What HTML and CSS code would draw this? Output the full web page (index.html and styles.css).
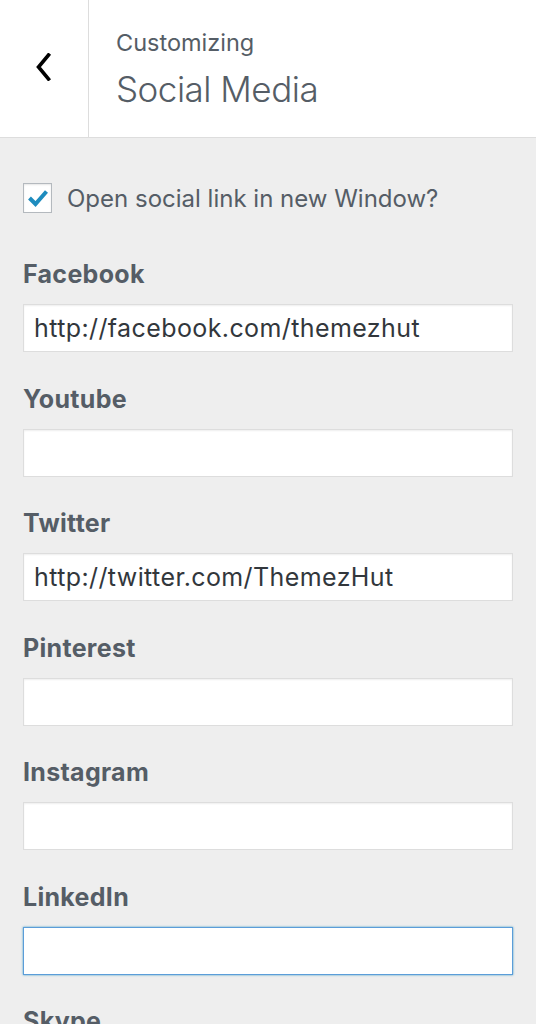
FILE: index.html
```html
<!DOCTYPE html>
<html>
<head>
<meta charset="utf-8">
<link rel="stylesheet" href="styles.css">
</head>
<body>
<div class="header">
  <div class="back">
    <svg width="18" height="28" viewBox="0 0 18 28"><path d="M14.5 2 L4.5 14 L14.5 26" fill="none" stroke="#000" stroke-width="3.6" stroke-linecap="square"/></svg>
  </div>
  <div class="titles">
    <div class="sub">Customizing</div>
    <div class="title">Social Media</div>
  </div>
</div>
<div class="content">
  <label class="check">
    <span class="box"><svg width="22" height="18" viewBox="0 0 22 18"><path d="M2.5 9 L8.5 15 L19.5 2.5" fill="none" stroke="#1e8cbe" stroke-width="4"/></svg></span>
    <span class="check-text">Open social link in new Window?</span>
  </label>
  <div class="field"><div class="label">Facebook</div><div class="input">http://facebook.com/themezhut</div></div>
  <div class="field"><div class="label">Youtube</div><div class="input"></div></div>
  <div class="field"><div class="label">Twitter</div><div class="input">http://twitter.com/ThemezHut</div></div>
  <div class="field"><div class="label">Pinterest</div><div class="input"></div></div>
  <div class="field"><div class="label">Instagram</div><div class="input"></div></div>
  <div class="field"><div class="label">LinkedIn</div><div class="input focus"></div></div>
  <div class="field"><div class="label">Skype</div><div class="input"></div></div>
</div>
</body>
</html>
```
FILE: styles.css
```css
html, body { margin: 0; padding: 0; }
body { background: #eeeeee; font-family: Inter, "Noto Sans", sans-serif; color: #555d66; width: 536px; height: 1024px; overflow: hidden; }
.header { display: flex; height: 137px; background: #fff; border-bottom: 1px solid #dddddd; }
.back { width: 89px; flex: none; border-right: 1px solid #dddddd; display: flex; align-items: center; justify-content: center; padding-bottom: 3px; box-sizing: border-box; }
.back svg { margin-left: -2px; }
.titles { padding-left: 27px; padding-top: 29px; }
.sub { font-size: 23.5px; line-height: 28px; color: #555d66; }
.title { font-size: 35px; font-weight: 300; line-height: 40px; letter-spacing: -0.5px; color: #555d66; margin-top: 12px; }
.content { padding: 45px 23px 0 23px; }
.check { display: flex; align-items: center; gap: 15px; height: 30px; }
.box { width: 29px; height: 30px; border: 1px solid #b4b9be; background: #fff; display: flex; align-items: center; justify-content: center; box-sizing: border-box; box-shadow: inset 0 1px 2px rgba(0,0,0,0.1); }
.check-text { font-size: 24px; color: #555d66; }
.field { margin-top: 31.5px; }
.check + .field { margin-top: 46px; }
.label { font-size: 25px; font-weight: 700; letter-spacing: 0.3px; line-height: 30px; margin-bottom: 15px; color: #555d66; }
.input { height: 48px; box-sizing: border-box; background: #fff; border: 1px solid #dddddd; box-shadow: inset 0 1px 2px rgba(0,0,0,0.07); font-size: 25px; letter-spacing: 0.4px; color: #32373c; padding: 0 10px; line-height: 46px; }
.input.focus { border-color: #5b9dd9; box-shadow: 0 0 2px rgba(30,140,190,0.8); }
```
